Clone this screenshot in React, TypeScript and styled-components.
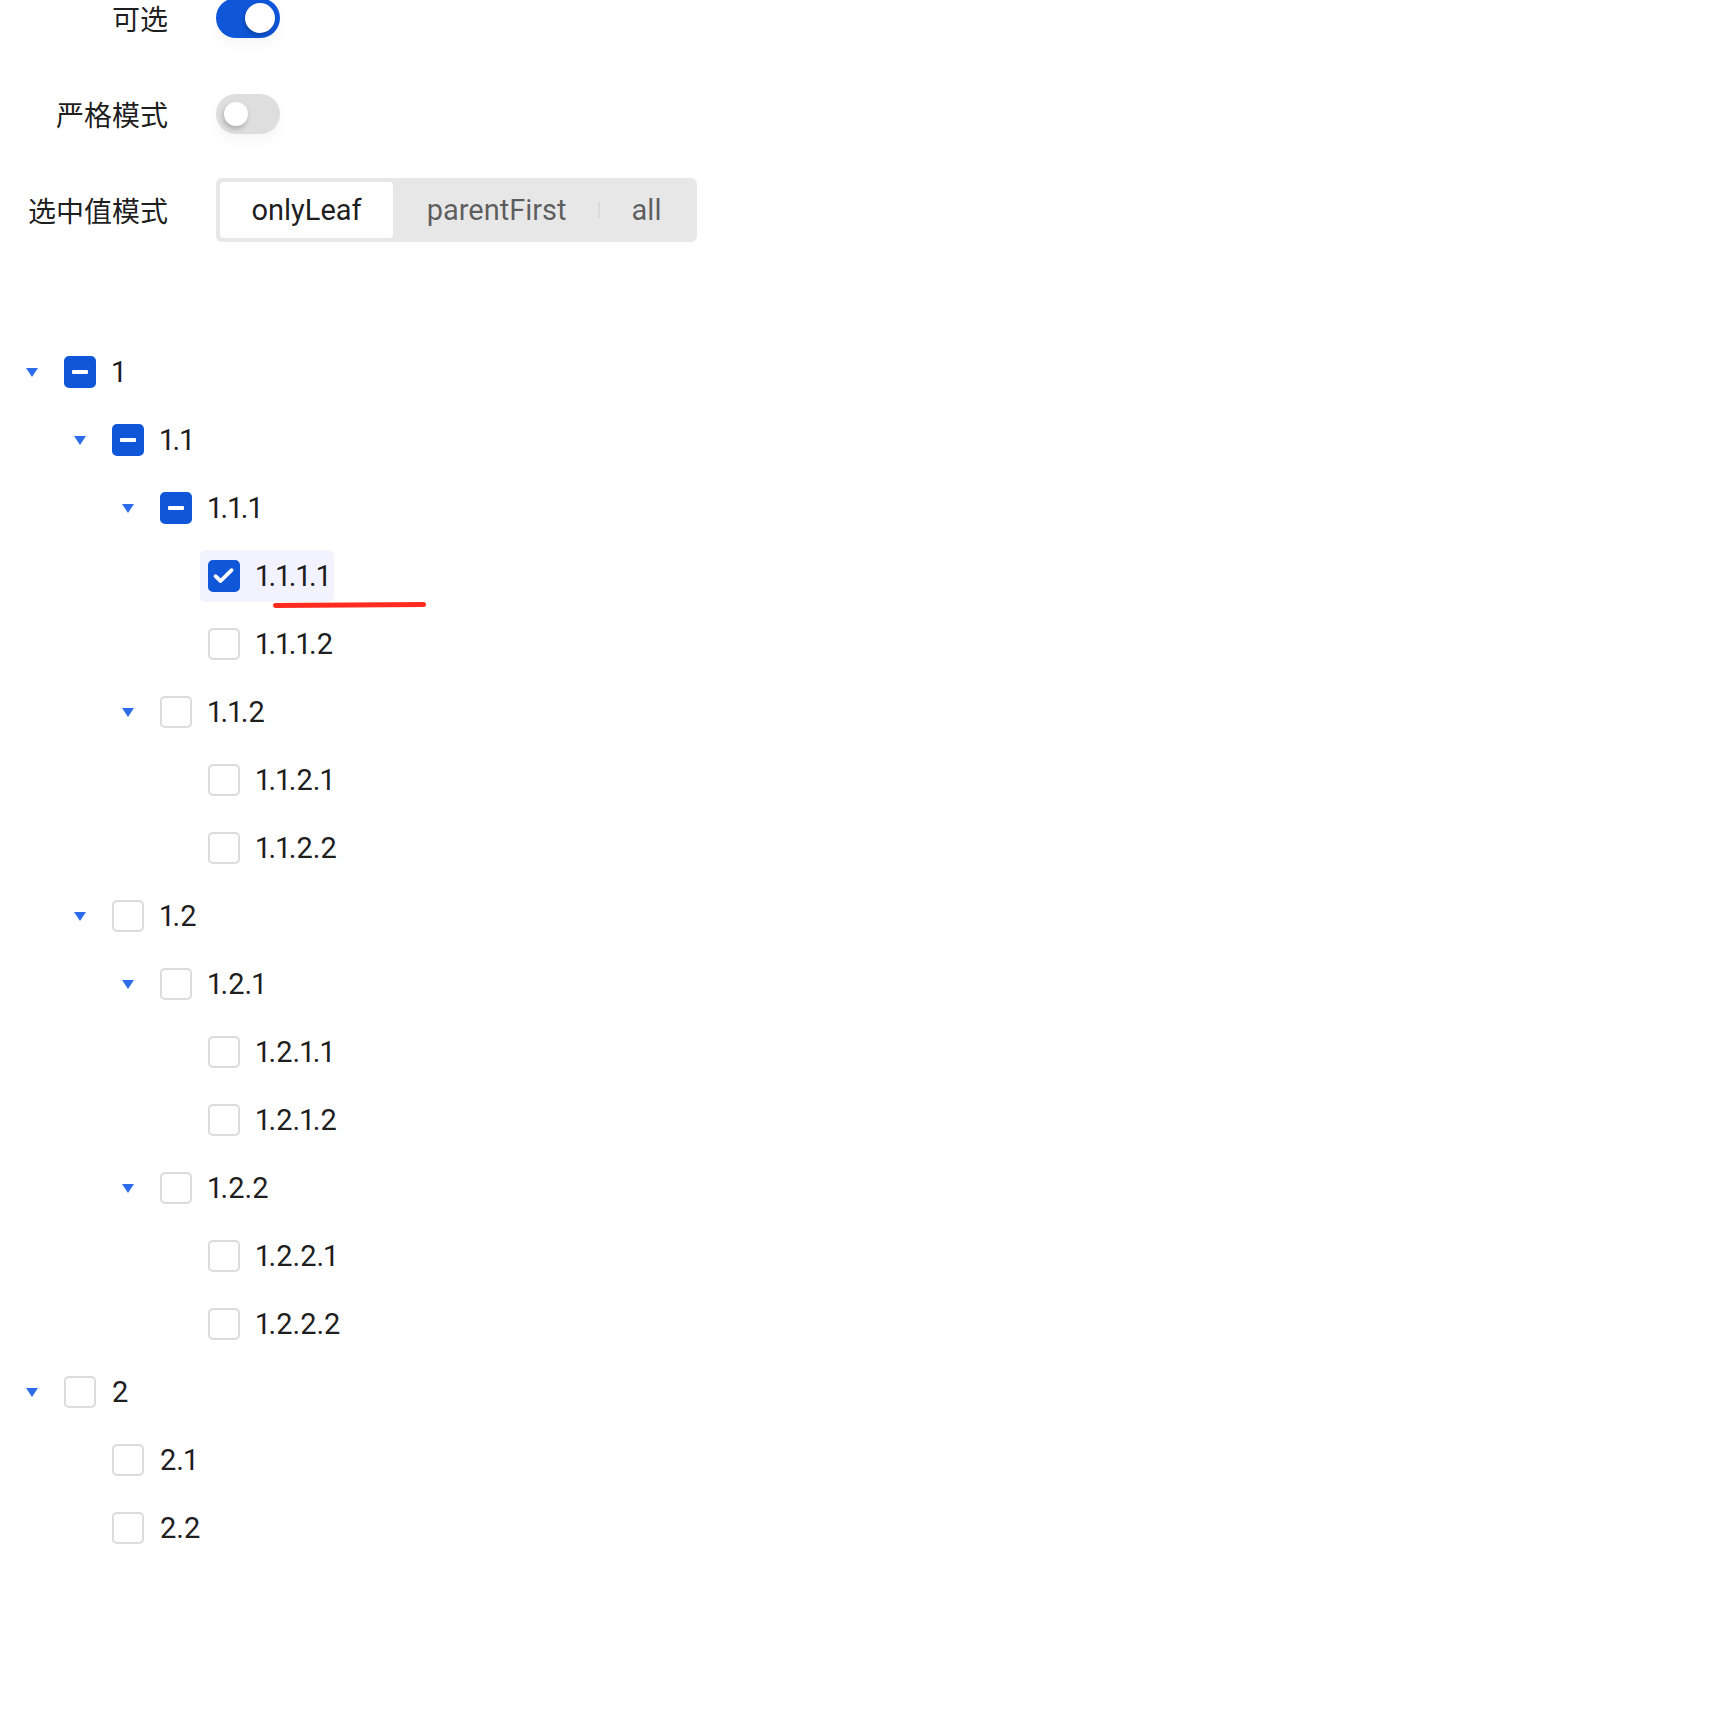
import type { FC } from 'react';
import { Fragment } from 'react';
import styled, { createGlobalStyle } from 'styled-components';

type CheckState = 'checked' | 'half' | 'none';

interface TreeNode {
  label: string;
  check: CheckState;
  active?: boolean;
  marked?: boolean;
  children?: TreeNode[];
}

interface FlatNode {
  node: TreeNode;
  level: number;
}

const GlobalStyle = createGlobalStyle`
  html, body {
    margin: 0;
    padding: 0;
    background: #ffffff;
    overflow: hidden;
  }

  body {
    font-family: Roboto, "Noto Sans CJK SC", Arial, sans-serif;
    font-variant-numeric: proportional-nums;
    color: rgba(0, 0, 0, 0.9);
    -webkit-font-smoothing: antialiased;
  }
`;

const Page = styled.div`
  margin-top: -14px;
  width: 1736px;
  height: 1732px;
`;

const Form = styled.div`
  display: flex;
  flex-direction: column;
  gap: 32px;
`;

const FormRow = styled.div`
  display: flex;
  align-items: center;
  height: 64px;
`;

const FormLabel = styled.label`
  width: 168px;
  margin-right: 48px;
  text-align: right;
  font-family: "Noto Sans CJK SC", Roboto, sans-serif;
  font-size: 28px;
  line-height: 40px;
  color: rgba(0, 0, 0, 0.9);
`;

const SwitchTrack = styled.button<{ $on: boolean }>`
  position: relative;
  width: 64px;
  height: 40px;
  padding: 0;
  border: none;
  border-radius: 20px;
  background: ${(p) => (p.$on ? '#0f56d9' : '#dedede')};
  box-shadow: 0 6px 12px rgba(0, 0, 0, 0.04);
  cursor: pointer;
`;

const SwitchKnob = styled.span<{ $on: boolean }>`
  position: absolute;
  top: 50%;
  width: ${(p) => (p.$on ? 30 : 24)}px;
  height: ${(p) => (p.$on ? 30 : 24)}px;
  border-radius: 50%;
  background: #ffffff;
  transform: translateY(-50%);
  ${(p) => (p.$on ? 'right: 5px;' : 'left: 8px;')}
  box-shadow: -1px 3px 5px rgba(0, 0, 0, 0.22);
`;

const Segmented = styled.div`
  display: inline-flex;
  align-items: center;
  height: 64px;
  padding: 4px;
  box-sizing: border-box;
  border-radius: 6px;
  background: #e7e7e7;
`;

const SegmentItem = styled.div<{ $selected: boolean }>`
  height: 56px;
  padding: 0 31.5px;
  border-radius: 4px;
  font-size: 29px;
  line-height: 56px;
  background: ${(p) => (p.$selected ? '#ffffff' : 'transparent')};
  color: ${(p) => (p.$selected ? 'rgba(0, 0, 0, 0.9)' : 'rgba(0, 0, 0, 0.6)')};
`;

const SegmentDivider = styled.span<{ $hidden: boolean }>`
  width: 2px;
  height: 16px;
  background: ${(p) => (p.$hidden ? 'transparent' : '#dadada')};
`;

const Tree = styled.div`
  margin-top: 96px;
  display: flex;
  flex-direction: column;
`;

const TreeRow = styled.div<{ $level: number }>`
  display: flex;
  align-items: center;
  height: 68px;
  padding-left: ${(p) => 16 + p.$level * 48}px;
`;

const Expander = styled.span`
  display: flex;
  align-items: center;
  justify-content: center;
  width: 32px;
  height: 32px;
`;

const Caret = styled.span`
  width: 0;
  height: 0;
  border-left: 6px solid transparent;
  border-right: 6px solid transparent;
  border-top: 9px solid #2d6cea;
`;

const NodeLabel = styled.div<{ $active: boolean }>`
  position: relative;
  display: flex;
  align-items: center;
  gap: 16px;
  height: 52px;
  margin-left: 8px;
  padding: 0 5px 0 8px;
  border-radius: 6px;
  background: ${(p) => (p.$active ? '#f2f3ff' : 'transparent')};
`;

const CheckBox = styled.span<{ $state: CheckState }>`
  display: flex;
  align-items: center;
  justify-content: center;
  width: 32px;
  height: 32px;
  box-sizing: border-box;
  border-radius: 5px;
  border: 2px solid ${(p) => (p.$state === 'none' ? '#dcdcdc' : '#0f56d9')};
  background: ${(p) => (p.$state === 'none' ? '#ffffff' : '#0f56d9')};
`;

const HalfBar = styled.span`
  width: 16px;
  height: 4px;
  border-radius: 1px;
  background: #ffffff;
`;

const NodeText = styled.span`
  font-size: 29px;
  line-height: 40px;
  color: rgba(0, 0, 0, 0.9);
  white-space: nowrap;
`;

// red pen stroke drawn over the screenshot, under "1.1.1.1"
const Annotation = styled.span`
  position: absolute;
  left: 73px;
  top: 53px;
  width: 153px;
  height: 5px;
  border-radius: 3px;
  background: #ff2b1e;
  transform: rotate(-0.4deg);
  transform-origin: left center;
`;

const treeData: TreeNode[] = [
  {
    label: '1',
    check: 'half',
    children: [
      {
        label: '1.1',
        check: 'half',
        children: [
          {
            label: '1.1.1',
            check: 'half',
            children: [
              { label: '1.1.1.1', check: 'checked', active: true, marked: true },
              { label: '1.1.1.2', check: 'none' },
            ],
          },
          {
            label: '1.1.2',
            check: 'none',
            children: [
              { label: '1.1.2.1', check: 'none' },
              { label: '1.1.2.2', check: 'none' },
            ],
          },
        ],
      },
      {
        label: '1.2',
        check: 'none',
        children: [
          {
            label: '1.2.1',
            check: 'none',
            children: [
              { label: '1.2.1.1', check: 'none' },
              { label: '1.2.1.2', check: 'none' },
            ],
          },
          {
            label: '1.2.2',
            check: 'none',
            children: [
              { label: '1.2.2.1', check: 'none' },
              { label: '1.2.2.2', check: 'none' },
            ],
          },
        ],
      },
    ],
  },
  {
    label: '2',
    check: 'none',
    children: [
      { label: '2.1', check: 'none' },
      { label: '2.2', check: 'none' },
    ],
  },
];

const flatten = (nodes: TreeNode[], level = 0): FlatNode[] =>
  nodes.flatMap((node) => [
    { node, level },
    ...(node.children ? flatten(node.children, level + 1) : []),
  ]);

const valueModes = ['onlyLeaf', 'parentFirst', 'all'];

const Switch: FC<{ on: boolean }> = ({ on }) => (
  <SwitchTrack $on={on} aria-pressed={on}>
    <SwitchKnob $on={on} />
  </SwitchTrack>
);

const Check: FC<{ state: CheckState }> = ({ state }) => (
  <CheckBox $state={state}>
    {state === 'half' && <HalfBar />}
    {state === 'checked' && (
      <svg width="28" height="28" viewBox="0 0 28 28" fill="none">
        <path
          d="M5.5 14.2 L10.6 19 L21.6 8.2"
          stroke="#ffffff"
          strokeWidth="3.8"
          strokeLinecap="round"
          strokeLinejoin="round"
        />
      </svg>
    )}
  </CheckBox>
);

export default function App() {
  const selectedMode = 0;
  const rows = flatten(treeData);

  return (
    <>
      <GlobalStyle />
      <Page>
        <Form>
          <FormRow>
            <FormLabel>可选</FormLabel>
            <Switch on />
          </FormRow>
          <FormRow>
            <FormLabel>严格模式</FormLabel>
            <Switch on={false} />
          </FormRow>
          <FormRow>
            <FormLabel>选中值模式</FormLabel>
            <Segmented>
              {valueModes.map((mode, i) => (
                <Fragment key={mode}>
                  {i > 0 && (
                    <SegmentDivider
                      $hidden={i === selectedMode || i - 1 === selectedMode}
                    />
                  )}
                  <SegmentItem $selected={i === selectedMode}>{mode}</SegmentItem>
                </Fragment>
              ))}
            </Segmented>
          </FormRow>
        </Form>

        <Tree>
          {rows.map(({ node, level }) => (
            <TreeRow key={node.label} $level={level}>
              <Expander>{node.children && <Caret />}</Expander>
              <NodeLabel $active={!!node.active}>
                <Check state={node.check} />
                <NodeText>{node.label}</NodeText>
                {node.marked && <Annotation />}
              </NodeLabel>
            </TreeRow>
          ))}
        </Tree>
      </Page>
    </>
  );
}
